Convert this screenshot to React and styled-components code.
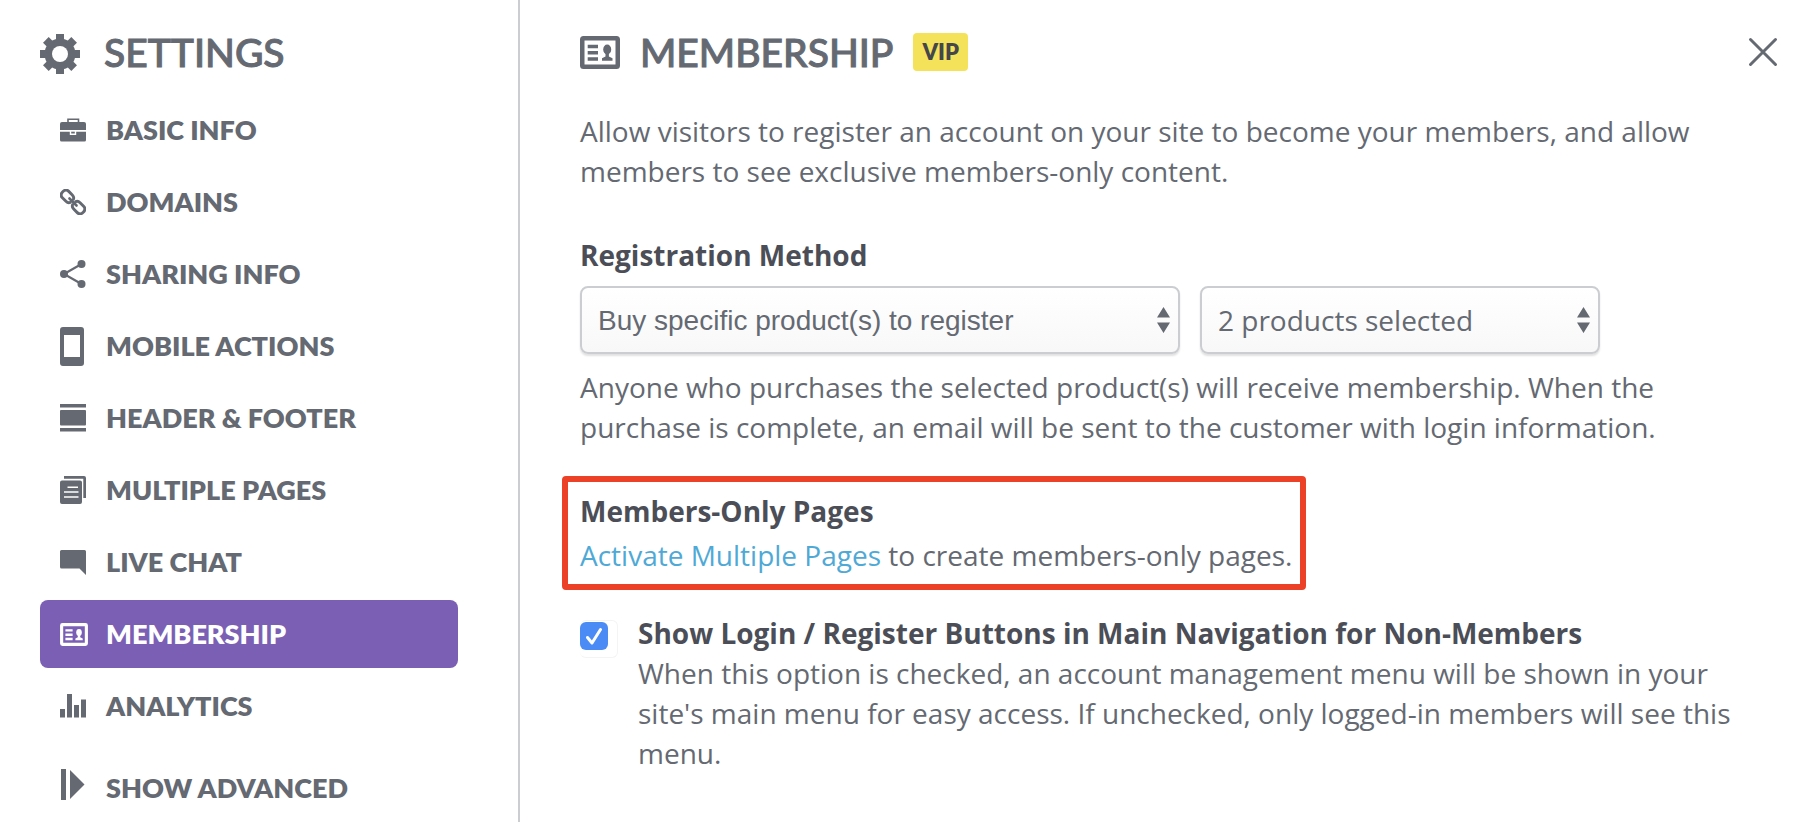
import React, { useState } from 'react';
import styled, { createGlobalStyle, ThemeProvider } from 'styled-components';

const theme = {
  colors: {
    text: '#646972',
    strong: '#4b4e57',
    link: '#4fa9d6',
    purple: '#7a5fb4',
    yellow: '#f4e35a',
    red: '#ec4127',
    blue: '#4b8bf5',
    line: '#cccdd1',
  },
  fonts: {
    body: '"Open Sans", "Noto Sans", sans-serif',
    title: 'Lato, "Open Sans", sans-serif',
    system: '"Liberation Sans", Arial, sans-serif',
  },
};

const GlobalStyle = createGlobalStyle`
  *, *::before, *::after {
    box-sizing: border-box;
  }

  body {
    background: #fff;
    color: ${theme.colors.text};
    font-family: ${theme.fonts.body};
    font-size: 28px;
    line-height: 40px;
    margin: 0;
  }
`;

const Page = styled.div`
  display: grid;
  grid-template-columns: 520px minmax(0, 1fr);
  min-height: 100vh;
`;

const Sidebar = styled.aside`
  border-right: 2px solid ${({ theme }) => theme.colors.line};
  padding: 32px 60px 0 40px;
`;

const TitleRow = styled.header`
  align-items: center;
  display: flex;
  height: 40px;
`;

const TitleIcon = styled.span`
  display: flex;
  flex: none;
  width: ${({ $width }) => $width}px;
`;

const Title = styled.h1`
  font-family: ${({ theme }) => theme.fonts.title};
  font-size: 39px;
  font-weight: 500;
  line-height: 40px;
  margin: 0;
  text-transform: uppercase;
  -webkit-text-stroke: 1px currentColor;
`;

const Menu = styled.ul`
  display: grid;
  gap: 4px;
  list-style: none;
  margin: 24px 0 0;
  padding: 0;
`;

const MenuItem = styled.li`
  margin-top: ${({ $spaced }) => ($spaced ? '10px' : '0')};
`;

const MenuLink = styled.a`
  align-items: center;
  background: ${({ $active, theme }) => ($active ? theme.colors.purple : 'transparent')};
  border-radius: 8px;
  color: ${({ $active, theme }) => ($active ? '#fff' : theme.colors.text)};
  display: flex;
  font-family: ${({ theme }) => theme.fonts.title};
  font-size: 27px;
  font-weight: 800;
  height: 68px;
  padding: 0 20px;
  text-decoration: none;
  text-transform: uppercase;
`;

const MenuIcon = styled.span`
  display: flex;
  flex: none;
  width: 46px;
`;

const Main = styled.main`
  padding: 32px 38px 40px 60px;
`;

const Badge = styled.span`
  background: ${({ theme }) => theme.colors.yellow};
  border-radius: 4px;
  color: #44464a;
  font-family: ${({ theme }) => theme.fonts.title};
  font-size: 22px;
  font-weight: 800;
  line-height: 38px;
  margin-left: 20px;
  padding: 0 9px;
`;

const CloseButton = styled.button`
  background: none;
  border: 0;
  color: inherit;
  cursor: pointer;
  display: flex;
  margin-left: auto;
  padding: 0;
`;

const Content = styled.div`
  padding-right: 24px;
`;

const Text = styled.p`
  margin: 0;
`;

const Intro = styled(Text)`
  margin-top: 39px;
`;

const Field = styled.section`
  margin-top: 44px;
`;

const Label = styled.label`
  color: ${({ theme }) => theme.colors.strong};
  display: block;
  font-weight: 700;
`;

const SelectRow = styled.div`
  display: flex;
  gap: 20px;
  margin: 11px 0 13px;
`;

const SelectBox = styled.div`
  align-items: center;
  display: grid;
  flex: 0 1 ${({ $width }) => $width}px;

  & > * {
    grid-area: 1 / 1;
  }

  svg {
    justify-self: end;
    margin-right: 10px;
    pointer-events: none;
  }
`;

const Select = styled.select`
  appearance: none;
  background: linear-gradient(#fff, #f8f8f8);
  border: 2px solid ${({ theme }) => theme.colors.line};
  border-radius: 8px;
  box-shadow: 0 2px 2px rgba(0, 0, 0, 0.12);
  color: inherit;
  font-family: ${({ $system, theme }) => ($system ? theme.fonts.system : theme.fonts.body)};
  font-size: 28px;
  height: 68px;
  padding: 0 32px 0 16px;
  width: 100%;
`;

const Highlight = styled.section`
  border: 6px solid ${({ theme }) => theme.colors.red};
  border-radius: 4px;
  margin: 29px 0 0 -18px;
  padding: 9px 8px 9px 12px;
  width: fit-content;
`;

const Heading = styled.h2`
  color: ${({ theme }) => theme.colors.strong};
  font-size: 28px;
  font-weight: 700;
  line-height: 40px;
  margin: 0 0 4px;
`;

const Link = styled.a`
  color: ${({ theme }) => theme.colors.link};
  text-decoration: none;
`;

const Option = styled.section`
  align-items: start;
  display: grid;
  gap: 20px;
  grid-template-columns: 38px minmax(0, 1fr);
  margin-top: 23px;
`;

const CheckboxFrame = styled.div`
  border: 1px solid #f4f4f5;
  border-left: 0;
  border-radius: 6px;
  height: 38px;
  margin-top: 7px;
  padding-top: 1px;
`;

const Checkbox = styled.input`
  appearance: none;
  background: #fff;
  border: 1px solid ${({ theme }) => theme.colors.line};
  border-radius: 6px;
  display: block;
  height: 28px;
  margin: 0;
  width: 28px;

  &:checked {
    background: ${({ theme }) => theme.colors.blue}
      url("data:image/svg+xml,%3Csvg xmlns='http://www.w3.org/2000/svg' viewBox='0 0 28 28'%3E%3Cpath d='M7.5 15.500l4.500 5.500L20.500 7.500' fill='none' stroke='white' stroke-width='3' stroke-linecap='round' stroke-linejoin='round'/%3E%3C/svg%3E")
      center / 28px 28px no-repeat;
    border: 0;
  }
`;

const Svg = ({ w, h, scale = 1, children }) => (
  <svg
    width={Math.round(w * scale)}
    height={Math.round(h * scale)}
    viewBox={`0 0 ${w} ${h}`}
    fill="currentColor"
    aria-hidden="true"
  >
    {children}
  </svg>
);

// the extra rows at the top keep the gear on the optical centre of the title
const GearIcon = () => (
  <Svg w={40} h={44}>
    <mask id="gear-hole">
      <rect width="40" height="44" fill="#fff" />
      <circle cx="20" cy="24" r="8" fill="#000" />
    </mask>
    <g mask="url(#gear-hole)">
      <circle cx="20" cy="24" r="15.5" />
      {[0, 45, 90, 135].map(angle => (
        <rect key={angle} x="16" y="4" width="8" height="40" transform={`rotate(${angle} 20 24)`} />
      ))}
    </g>
  </Svg>
);

const BriefcaseIcon = () => (
  <Svg w={26} h={24}>
    <path d="M8 5V1.2h10.5V5" fill="none" stroke="currentColor" strokeWidth="1.6" />
    <path d="M2 4h22a2 2 0 0 1 2 2v6H0V6a2 2 0 0 1 2-2z" />
    <path d="M0 13.7h9.8v3.3h6.4v-3.3H26V22a1.5 1.5 0 0 1-1.5 1.5h-23A1.5 1.5 0 0 1 0 22z" />
    <rect x="11.2" y="13.7" width="3.6" height="1.8" />
  </Svg>
);

const ChainIcon = () => (
  <Svg w={26} h={26}>
    <g
      fill="none"
      stroke="currentColor"
      strokeWidth="2.9"
      strokeLinecap="round"
      transform="translate(13 13) rotate(45)"
    >
      <path d="M-1.600-2.200Q-2.600-4.500-5.500-4.500H-10.500Q-14.500-4.500-14.500 0T-10.500 4.500H-5.500Q-2.600 4.500-1.600 2.200" />
      <path d="M1.600-2.200Q2.600-4.500 5.500-4.500H10.500Q14.500-4.500 14.500 0T10.500 4.500H5.500Q2.600 4.500 1.600 2.200" />
      <path d="M-5 0H5" strokeWidth="2.6" />
    </g>
  </Svg>
);

const ShareIcon = () => (
  <Svg w={26} h={28}>
    <path d="M21.5 4 4 14l17.5 10" fill="none" stroke="currentColor" strokeWidth="2.2" />
    <circle cx="21.5" cy="4" r="4" />
    <circle cx="4" cy="14" r="4" />
    <circle cx="21.5" cy="24" r="4" />
  </Svg>
);

const PhoneIcon = () => (
  <Svg w={24} h={39}>
    <path
      fillRule="evenodd"
      d="M3 0h18a3 3 0 0 1 3 3v33a3 3 0 0 1-3 3H3a3 3 0 0 1-3-3V3a3 3 0 0 1 3-3zm1 8v22h16V8z"
    />
  </Svg>
);

const HeaderFooterIcon = () => (
  <Svg w={26} h={28}>
    <rect width="26" height="3.5" />
    <rect y="6" width="26" height="15.5" rx="1" />
    <rect y="24" width="26" height="3.5" />
  </Svg>
);

const PagesIcon = () => (
  <Svg w={26} h={28}>
    <path d="M4 0h20a2 2 0 0 1 2 2v20h-2.700V2.700H4z" />
    <path
      fillRule="evenodd"
      d="M2 4.500h18a2 2 0 0 1 2 2V26a2 2 0 0 1-2 2H2a2 2 0 0 1-2-2V6.500a2 2 0 0 1 2-2zM7.500 10.500V12H18v-1.500zM4 15.300v1.500h14.500v-1.500zM4 20.200v1.500h14.500v-1.500z"
    />
  </Svg>
);

const ChatIcon = () => (
  <Svg w={26} h={25}>
    <path d="M1.500 0h23A1.500 1.500 0 0 1 26 1.500V25l-6.500-6.500h-18A1.500 1.500 0 0 1 0 17V1.500A1.500 1.500 0 0 1 1.500 0z" />
  </Svg>
);

const CardIcon = ({ scale }) => (
  <Svg w={40} h={33} scale={scale}>
    <path
      fillRule="evenodd"
      d="M3.500 0h33A3.500 3.500 0 0 1 40 3.500v26a3.500 3.500 0 0 1-3.500 3.500h-33A3.500 3.500 0 0 1 0 29.500v-26A3.500 3.500 0 0 1 3.500 0zM4.500 4.500v24h31v-24z"
    />
    <path d="M7.700 8.800H18v3.500H7.700zM7.700 15H18v3.500H7.700zM7.700 21.200H18v3.500H7.700z" />
    <ellipse cx="27.200" cy="13.500" rx="4" ry="5" />
    <path d="M25.500 17h3.400v3.500l3.600 1.800v2.400H22v-2.400l3.500-1.800z" />
  </Svg>
);

const ChartIcon = () => (
  <Svg w={26} h={24}>
    <rect y="15" width="5" height="8.500" />
    <rect x="7" width="5" height="23.500" />
    <rect x="14" y="11" width="5" height="12.500" />
    <rect x="21" y="5.500" width="5" height="18" />
  </Svg>
);

const AdvancedIcon = () => (
  <Svg w={26} h={38}>
    <rect x="1" width="5" height="31" />
    <path d="M10 1l14.500 14.500L10 30z" />
  </Svg>
);

const CloseIcon = () => (
  <Svg w={30} h={30}>
    <path d="M2.500 2.500l25 25M27.500 2.500l-25 25" stroke="currentColor" strokeWidth="3" strokeLinecap="round" />
  </Svg>
);

const ArrowsIcon = () => (
  <Svg w={13} h={26}>
    <path d="M6.500 0 13 10.500H0zM0 15.500h13L6.500 26z" />
  </Svg>
);

const menu = [
  { label: 'Basic Info', icon: <BriefcaseIcon /> },
  { label: 'Domains', icon: <ChainIcon /> },
  { label: 'Sharing Info', icon: <ShareIcon /> },
  { label: 'Mobile Actions', icon: <PhoneIcon /> },
  { label: 'Header & Footer', icon: <HeaderFooterIcon /> },
  { label: 'Multiple Pages', icon: <PagesIcon /> },
  { label: 'Live Chat', icon: <ChatIcon /> },
  { label: 'Membership', icon: <CardIcon scale={0.71} />, active: true },
  { label: 'Analytics', icon: <ChartIcon /> },
  { label: 'Show Advanced', icon: <AdvancedIcon />, spaced: true },
];

const App = () => {
  const [showLogin, setShowLogin] = useState(true);

  return (
    <ThemeProvider theme={theme}>
      <GlobalStyle />
      <Page>
        <Sidebar>
          <TitleRow>
            <TitleIcon $width={64}>
              <GearIcon />
            </TitleIcon>
            <Title as="h2">Settings</Title>
          </TitleRow>
          <nav>
            <Menu>
              {menu.map(({ label, icon, active, spaced }) => (
                <MenuItem key={label} $spaced={spaced}>
                  <MenuLink href="#" $active={active} aria-current={active ? 'page' : undefined}>
                    <MenuIcon>{icon}</MenuIcon>
                    {label}
                  </MenuLink>
                </MenuItem>
              ))}
            </Menu>
          </nav>
        </Sidebar>
        <Main>
          <TitleRow>
            <TitleIcon $width={60}>
              <CardIcon />
            </TitleIcon>
            <Title>Membership</Title>
            <Badge>VIP</Badge>
            <CloseButton type="button" aria-label="Close">
              <CloseIcon />
            </CloseButton>
          </TitleRow>
          <Content>
            <Intro>
              Allow visitors to register an account on your site to become your members, and allow
              members to see exclusive members-only content.
            </Intro>
            <Field>
              <Label htmlFor="method">Registration Method</Label>
              <SelectRow>
                <SelectBox $width={600}>
                  <Select id="method" $system>
                    <option>Buy specific product(s) to register</option>
                  </Select>
                  <ArrowsIcon />
                </SelectBox>
                <SelectBox $width={400}>
                  <Select aria-label="Products">
                    <option>2 products selected</option>
                  </Select>
                  <ArrowsIcon />
                </SelectBox>
              </SelectRow>
              <Text>
                Anyone who purchases the selected product(s) will receive membership. When the
                purchase is complete, an email will be sent to the customer with login information.
              </Text>
            </Field>
            <Highlight>
              <Heading>Members-Only Pages</Heading>
              <Text>
                <Link href="#">Activate Multiple Pages</Link> to create members-only pages.
              </Text>
            </Highlight>
            <Option>
              <CheckboxFrame>
                <Checkbox
                  id="show-login"
                  type="checkbox"
                  checked={showLogin}
                  onChange={event => setShowLogin(event.target.checked)}
                />
              </CheckboxFrame>
              <div>
                <Label htmlFor="show-login">
                  Show Login / Register Buttons in Main Navigation for Non-Members
                </Label>
                <Text>
                  When this option is checked, an account management menu will be shown in your
                  site's main menu for easy access. If unchecked, only logged-in members will see
                  this menu.
                </Text>
              </div>
            </Option>
          </Content>
        </Main>
      </Page>
    </ThemeProvider>
  );
};

export default App;
